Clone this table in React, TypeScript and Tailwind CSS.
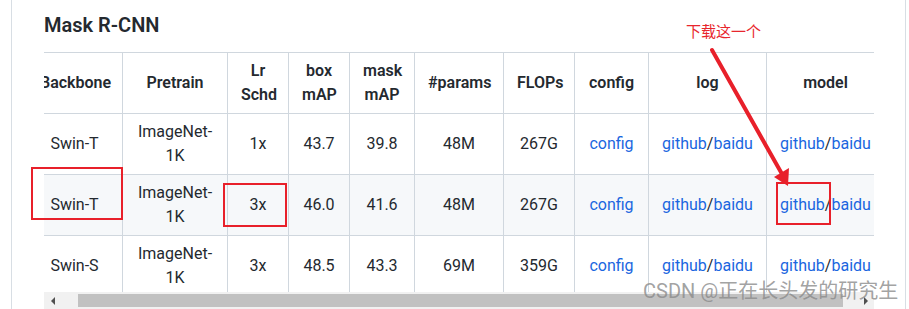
import React from "react";

const rows = [
  { backbone: "Swin-T", schd: "1x", box: "43.7", mask: "39.8", params: "48M", flops: "267G" },
  { backbone: "Swin-T", schd: "3x", box: "46.0", mask: "41.6", params: "48M", flops: "267G" },
  { backbone: "Swin-S", schd: "3x", box: "48.5", mask: "43.3", params: "69M", flops: "359G" },
];

const headers = ["Backbone", "Pretrain", "Lr Schd", "box mAP", "mask mAP", "#params", "FLOPs", "config", "log", "model"];
const widths = [96, 105, 61, 61, 65, 89, 71, 74, 118, 118];

const Links = () => (
  <>
    <a className="text-[#1a66e0]">github</a>/<a className="text-[#1a66e0]">baidu</a>
  </>
);

const App = () => {
  return (
    <div className="relative h-[309px] w-[909px] overflow-hidden bg-white font-['Roboto',sans-serif] text-[#24292f]">
      <div className="ml-[11px] flex h-full w-[895px] flex-col border-x border-[#d8dee4] pl-8 pr-[31px] pt-[10px]">
        <h3 className="text-[20px] font-semibold leading-[30px]">Mask R-CNN</h3>

        {/* table is scrolled a little to the right */}
        <div className="mt-[12px] overflow-hidden">
          <table className="-ml-[18px] w-[858px] table-fixed border-collapse text-center text-[16px] leading-6">
            <colgroup>
              {widths.map((w, i) => (
                <col key={i} style={{ width: w }} />
              ))}
            </colgroup>
            <thead>
              <tr className="border-t border-[#d0d7de]">
                {headers.map((h) => (
                  <th key={h} className="border border-[#d0d7de] px-[13px] py-[6px] font-semibold">
                    {h}
                  </th>
                ))}
              </tr>
            </thead>
            <tbody>
              {rows.map((r, i) => (
                <tr key={i} className={i === 1 ? "bg-[#f6f8fa]" : "bg-white"}>
                  <td className="border border-[#d0d7de] px-[13px] py-[6px]">{r.backbone}</td>
                  <td className="border border-[#d0d7de] px-[13px] py-[6px]">ImageNet-1K</td>
                  <td className="border border-[#d0d7de] px-[13px] py-[6px]">{r.schd}</td>
                  <td className="border border-[#d0d7de] px-[13px] py-[6px]">{r.box}</td>
                  <td className="border border-[#d0d7de] px-[13px] py-[6px]">{r.mask}</td>
                  <td className="border border-[#d0d7de] px-[13px] py-[6px]">{r.params}</td>
                  <td className="border border-[#d0d7de] px-[13px] py-[6px]">{r.flops}</td>
                  <td className="border border-[#d0d7de] px-[13px] py-[6px]">
                    <a className="text-[#1a66e0]">config</a>
                  </td>
                  <td className="whitespace-nowrap border border-[#d0d7de] px-[13px] py-[6px]">
                    <Links />
                  </td>
                  <td className="whitespace-nowrap border border-[#d0d7de] px-[13px] py-[6px]">
                    <Links />
                  </td>
                </tr>
              ))}
            </tbody>
          </table>
        </div>

        {/* horizontal scrollbar */}
        <div className="flex h-[17px] shrink-0 bg-[#f1f1f1]">
          <div className="flex w-[17px] items-center justify-center">
            <svg width="8" height="8" viewBox="0 0 8 8">
              <polygon points="6,0 6,8 2,4" fill="#505050" />
            </svg>
          </div>
          <div className="w-[17px]" />
          <div className="my-[2px] flex-1 bg-[#c1c1c1]" />
          <div className="w-[14px]" />
          <div className="flex w-[17px] items-center justify-center">
            <svg width="8" height="8" viewBox="0 0 8 8">
              <polygon points="2,0 2,8 6,4" fill="#505050" />
            </svg>
          </div>
        </div>
      </div>

      {/* annotations */}
      <div className="absolute left-[686px] top-[21px] font-['Noto_Sans_CJK_SC',sans-serif] text-[15px] leading-5 text-[#e8262d]">
        下载这一个
      </div>
      <svg className="pointer-events-none absolute left-0 top-0" width="909" height="309">
        <line x1="712" y1="50" x2="782" y2="174" stroke="#e8202a" strokeWidth="4" strokeLinecap="round" />
        <polygon points="788,186 774,177 789,168" fill="#e8202a" />
      </svg>
      <div className="absolute left-[31px] top-[167px] h-[53px] w-[92px] border-2 border-[#e8202a]" />
      <div className="absolute left-[223px] top-[183px] h-[44px] w-[64px] border-2 border-[#e8202a]" />
      <div className="absolute left-[776px] top-[182px] h-[43px] w-[55px] border-2 border-[#e8202a]" />

      <div className="absolute left-[643px] top-[277px] whitespace-nowrap font-['Roboto','Noto_Sans_CJK_SC',sans-serif] text-[20px] leading-7 text-[#8a8a8a]/80">
        CSDN @正在长头发的研究生
      </div>
    </div>
  );
};

export default App;
